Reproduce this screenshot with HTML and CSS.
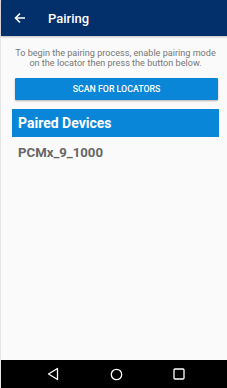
FILE: index.html
```html
<!DOCTYPE html>
<html>
<head>
<meta charset="utf-8">
<link rel="stylesheet" href="styles.css">
</head>
<body>
<div class="screen">
  <header class="appbar">
    <svg class="back" width="12" height="12" viewBox="0 0 12 12"><path d="M11 6H2M6 1.5L1.5 6 6 10.5" fill="none" stroke="#fff" stroke-width="1.6"/></svg>
    <span class="title">Pairing</span>
  </header>
  <main class="content">
    <p class="intro">To begin the pairing process, enable pairing mode on the locator then press the button below.</p>
    <button class="scan">SCAN FOR LOCATORS</button>
    <div class="section">Paired Devices</div>
    <div class="device">PCMx_9_1000</div>
  </main>
  <nav class="navbar">
    <svg width="12" height="14" viewBox="0 0 12 14"><path d="M10.5 1.5V12.5L1.5 7Z" fill="none" stroke="#fff" stroke-width="1.3" stroke-linejoin="round"/></svg>
    <svg width="13" height="13" viewBox="0 0 13 13"><circle cx="6.5" cy="6.5" r="5.2" fill="none" stroke="#fff" stroke-width="1.3"/></svg>
    <svg width="12" height="12" viewBox="0 0 12 12"><rect x="1" y="1" width="10" height="10" rx="1" fill="none" stroke="#fff" stroke-width="1.3"/></svg>
  </nav>
</div>
</body>
</html>
```
FILE: styles.css
```css
* { box-sizing: border-box; }
html, body { margin: 0; padding: 0; }
body { font-family: Roboto, "Liberation Sans", sans-serif; background: #fafafa; }
.screen { width: 227px; height: 388px; display: flex; flex-direction: column; border-left: 1px solid #e6e6e6; }
.appbar { height: 36px; background: #032f6b; display: flex; align-items: center; padding-left: 13px; box-shadow: 0 1px 2px rgba(0,0,0,0.25); position: relative; z-index: 1; }
.back { display: block; }
.title { color: #fff; font-size: 13px; font-weight: 500; margin-left: 22px; }
.content { flex: 1; display: flex; flex-direction: column; align-items: stretch; padding: 12px 8px 0 11px; }
.intro { margin: 0; font-size: 9.1px; line-height: 10px; color: #777; text-align: center; }
.scan { margin: 10px 1px 0 3px; height: 22px; border: none; border-radius: 1px; background: #0a86d8; color: #fff; font-family: Roboto, sans-serif; font-size: 8.8px; font-weight: 500; box-shadow: 0 1px 2px rgba(0,0,0,0.3); padding: 0; }
.section { margin-top: 9px; height: 28px; background: #0a86d8; color: #fff; font-size: 14px; font-weight: 700; display: flex; align-items: center; padding-left: 6px; }
.device { margin-top: 8px; padding-left: 6px; font-size: 13.2px; font-weight: 700; color: #666; }
.navbar { height: 28px; background: #000; display: flex; align-items: center; justify-content: space-between; padding: 0 42px 0 46px; }
.navbar svg { display: block; }
```
